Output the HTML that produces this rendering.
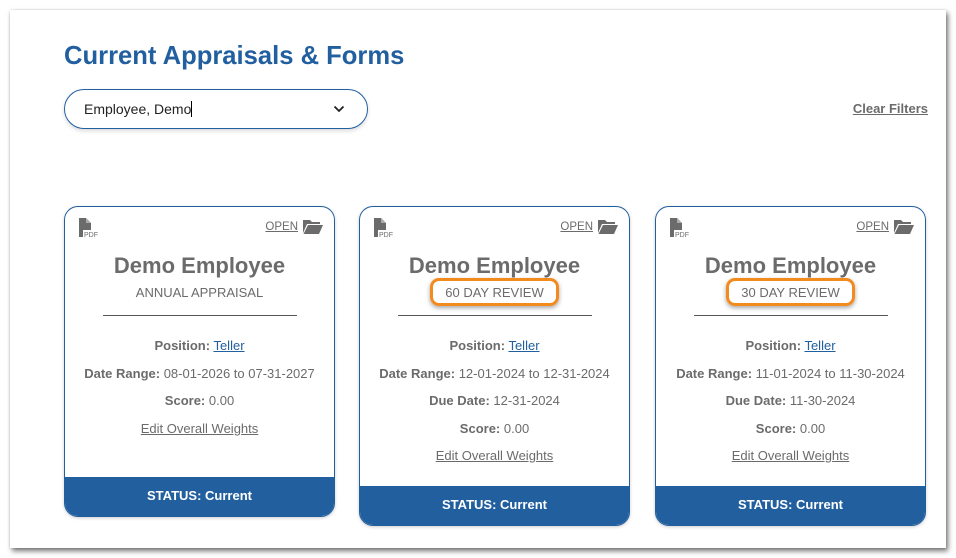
<!DOCTYPE html>
<html><head><style>
*{margin:0;padding:0;box-sizing:border-box}
body{width:956px;height:558px;background:#fff;font-family:"Liberation Sans",Arial,sans-serif;position:relative;overflow:hidden}
.panel{position:absolute;left:10px;top:10px;width:936px;height:538px;background:#fff;box-shadow:2px 3px 5px rgba(0,0,0,.55),0 0 2px rgba(0,0,0,.15)}
h1{position:absolute;left:64px;top:42px;font-size:25.6px;font-weight:bold;color:#225f9f;white-space:nowrap}
.sel{position:absolute;left:64px;top:89px;width:304px;height:40px;border:1px solid #225f9f;border-radius:20px;font-size:14px;color:#222;padding:11px 0 0 19px;box-shadow:0 2px 4px rgba(0,0,0,.15)}
.sel svg{position:absolute;right:22px;top:15px}
.clear{position:absolute;right:28px;top:101px;font-size:13px;font-weight:bold;color:#6b6b6b;text-decoration:underline}
.card{position:absolute;top:206px;width:271px;border:1px solid #225f9f;border-radius:14px;overflow:hidden;background:#fff;text-align:center;color:#6b6b6b;box-shadow:0 1px 3px rgba(0,0,0,.2)}
.pdf{position:absolute;left:13px;top:11px}
.open{position:absolute;right:10px;top:12px;font-size:11.5px;color:#6b6b6b;display:flex;align-items:center;gap:4px}
.open span{text-decoration:underline}
.name{position:absolute;left:0;right:0;top:46px;font-size:22px;font-weight:bold;color:#6b6b6b}
.sub{position:absolute;left:0;right:0;top:78px;font-size:13px}
.hl{display:inline-block;border:3px solid #f28a1e;border-radius:9px;padding:4px 12px 3px;margin-top:-7px;box-shadow:0 2px 5px rgba(0,0,0,.35)}
.line{position:absolute;left:38px;width:194px;top:108px;border-top:1px solid #555}
.row{position:absolute;left:0;right:0;font-size:13px}
.row b{font-weight:bold}
.row a{color:#225f9f;text-decoration:underline}
.row u{color:#6b6b6b}
.status{position:absolute;left:0;right:0;bottom:0;height:39px;background:#225f9f;color:#fff;font-weight:bold;font-size:13px;line-height:37px}
</style></head><body>
<div class="panel"></div>
<h1>Current Appraisals &amp; Forms</h1>
<div class="sel">Employee, Demo<span style="border-left:1px solid #000;height:16px;display:inline-block;vertical-align:-3px"></span>
<svg width="12" height="8" viewBox="0 0 12 8"><path d="M1.5 1.5 L6 6 L10.5 1.5" fill="none" stroke="#222" stroke-width="1.8"/></svg></div>
<div class="clear">Clear Filters</div>

<div class="card" style="left:64px;height:311px">
<svg class="pdf" width="20" height="20" viewBox="0 0 20 20"><path d="M1 0 H8 L13 5 V19 H1 Z" fill="#6b6b6b"/><path d="M8 0 V5 H13" fill="#aaa"/><rect x="5" y="12" width="15" height="8" fill="#fff"/><text x="6" y="19" font-size="7" font-family="Liberation Sans" fill="#6b6b6b">PDF</text></svg>
<div class="open"><span>OPEN</span><svg width="22" height="16" viewBox="0 0 22 16"><path d="M1 1 H8 L10 3 H18 V5 H5 L1 14 Z" fill="#6b6b6b"/><path d="M6 6 H21 L17 15 H1.5 Z" fill="#6b6b6b"/></svg></div>
<div class="name">Demo Employee</div>
<div class="sub">ANNUAL APPRAISAL</div>
<div class="line"></div>
<div class="row" style="top:131px"><b>Position:</b> <a>Teller</a></div>
<div class="row" style="top:159px"><b>Date Range:</b> 08-01-2026 to 07-31-2027</div>
<div class="row" style="top:186px"><b>Score:</b> 0.00</div>
<div class="row" style="top:214px"><u>Edit Overall Weights</u></div>
<div class="status">STATUS: Current</div>
</div>

<div class="card" style="left:359px;height:320px">
<svg class="pdf" width="20" height="20" viewBox="0 0 20 20"><path d="M1 0 H8 L13 5 V19 H1 Z" fill="#6b6b6b"/><path d="M8 0 V5 H13" fill="#aaa"/><rect x="5" y="12" width="15" height="8" fill="#fff"/><text x="6" y="19" font-size="7" font-family="Liberation Sans" fill="#6b6b6b">PDF</text></svg>
<div class="open"><span>OPEN</span><svg width="22" height="16" viewBox="0 0 22 16"><path d="M1 1 H8 L10 3 H18 V5 H5 L1 14 Z" fill="#6b6b6b"/><path d="M6 6 H21 L17 15 H1.5 Z" fill="#6b6b6b"/></svg></div>
<div class="name">Demo Employee</div>
<div class="sub"><span class="hl">60 DAY REVIEW</span></div>
<div class="line"></div>
<div class="row" style="top:131px"><b>Position:</b> <a>Teller</a></div>
<div class="row" style="top:159px"><b>Date Range:</b> 12-01-2024 to 12-31-2024</div>
<div class="row" style="top:186px"><b>Due Date:</b> 12-31-2024</div>
<div class="row" style="top:214px"><b>Score:</b> 0.00</div>
<div class="row" style="top:241px"><u>Edit Overall Weights</u></div>
<div class="status">STATUS: Current</div>
</div>

<div class="card" style="left:655px;height:320px">
<svg class="pdf" width="20" height="20" viewBox="0 0 20 20"><path d="M1 0 H8 L13 5 V19 H1 Z" fill="#6b6b6b"/><path d="M8 0 V5 H13" fill="#aaa"/><rect x="5" y="12" width="15" height="8" fill="#fff"/><text x="6" y="19" font-size="7" font-family="Liberation Sans" fill="#6b6b6b">PDF</text></svg>
<div class="open"><span>OPEN</span><svg width="22" height="16" viewBox="0 0 22 16"><path d="M1 1 H8 L10 3 H18 V5 H5 L1 14 Z" fill="#6b6b6b"/><path d="M6 6 H21 L17 15 H1.5 Z" fill="#6b6b6b"/></svg></div>
<div class="name">Demo Employee</div>
<div class="sub"><span class="hl">30 DAY REVIEW</span></div>
<div class="line"></div>
<div class="row" style="top:131px"><b>Position:</b> <a>Teller</a></div>
<div class="row" style="top:159px"><b>Date Range:</b> 11-01-2024 to 11-30-2024</div>
<div class="row" style="top:186px"><b>Due Date:</b> 11-30-2024</div>
<div class="row" style="top:214px"><b>Score:</b> 0.00</div>
<div class="row" style="top:241px"><u>Edit Overall Weights</u></div>
<div class="status">STATUS: Current</div>
</div>
</body></html>
